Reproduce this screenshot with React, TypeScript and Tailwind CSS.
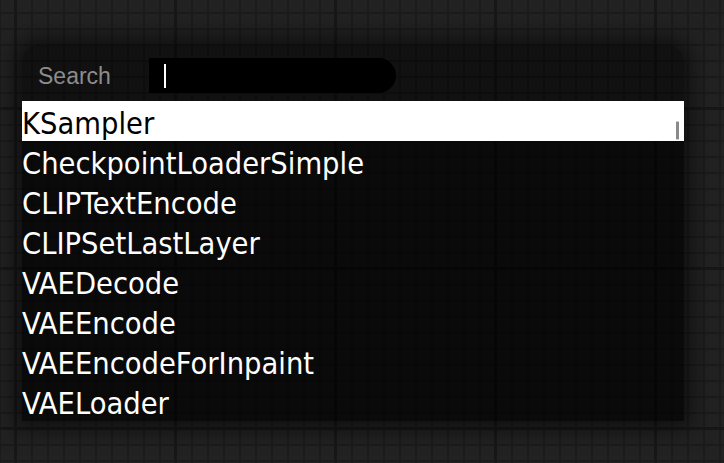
const items = [
  'KSampler',
  'CheckpointLoaderSimple',
  'CLIPTextEncode',
  'CLIPSetLastLayer',
  'VAEDecode',
  'VAEEncode',
  'VAEEncodeForInpaint',
  'VAELoader',
];

export default function App() {
  return (
    <div className="w-[724px] h-[463px] overflow-hidden bg-[#222222] bg-[image:linear-gradient(to_right,#171717_3px,transparent_3px),linear-gradient(to_bottom,#171717_3px,transparent_3px),linear-gradient(to_right,#1b1b1b_2px,transparent_2px),linear-gradient(to_bottom,#1b1b1b_2px,transparent_2px)] bg-[size:160px_160px,160px_160px,16px_16px,16px_16px] bg-[position:14px_107px,14px_107px,15px_12px,15px_12px] pl-[22px] pt-[45px]">
      {/* search box */}
      <div className="w-[662px] rounded-t-[16px] shadow-[0_0_22px_8px_rgba(0,0,0,0.55)]">
        {/* header */}
        <div className="h-[56px] flex items-start pt-[13px] bg-black/50 rounded-t-[16px]">
          <span className="w-[127px] pl-[16px] pt-[3px] text-[23px] leading-[30px] text-[#8c8c8c] font-['Liberation_Sans',Arial,sans-serif]">
            Search
          </span>
          <div className="w-[247px] h-[35px] bg-black rounded-r-[18px] flex items-center pl-[15px]">
            <div className="w-[2px] h-[24px] bg-white" />
          </div>
        </div>

        {/* results */}
        <div className="relative bg-black/70 font-['DejaVu_Sans_Condensed','DejaVu_Sans',sans-serif] [font-stretch:condensed] text-[30.5px]">
          {items.map((item, index) => (
            <div
              key={item}
              className={
                index === 0
                  ? 'h-[40px] leading-[35px] pt-[5px] bg-white text-black whitespace-nowrap'
                  : 'h-[40px] leading-[35px] pt-[5px] text-white whitespace-nowrap'
              }
            >
              {item}
            </div>
          ))}
          <div className="absolute right-[5px] top-[20px] w-[3px] h-[19px] bg-[#8a8a8a] border-y border-[#cfcfcf]" />
        </div>
      </div>
    </div>
  );
}
